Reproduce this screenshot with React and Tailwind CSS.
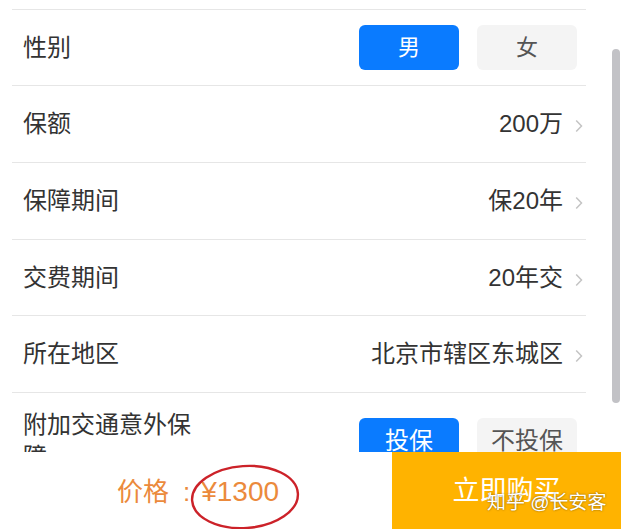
import React from "react";

const FONT = "font-['Liberation_Sans','Noto_Sans_CJK_SC',sans-serif]";

function Chevron() {
  return (
    <svg width="8" height="14" viewBox="0 0 8 14" className="ml-[12px] mt-[4px]">
      <path d="M1.2 1.5 L6.5 7 L1.2 12.5" fill="none" stroke="#c4c4c4" strokeWidth="1.5" />
    </svg>
  );
}

function PickRow({ label, options, active, h, labelClass = "" }) {
  return (
    <div className={`flex items-center justify-between border-b border-[#e6e6e6] pl-[11px] pr-[9px] ${h}`}>
      <div className={`text-[24px] text-[#333] ${labelClass}`}>{label}</div>
      <div className="flex gap-[18px]">
        {options.map((o, i) => (
          <div
            key={o}
            className={`flex h-[45px] w-[100px] items-center justify-center rounded-[6px] ${
              i === active ? "bg-[#0a7bff] text-white" : "bg-[#f4f4f4] text-[#555]"
            } ${o.length > 1 ? "text-[24px]" : "text-[22px]"}`}
          >
            {o}
          </div>
        ))}
      </div>
    </div>
  );
}

function ValueRow({ label, value, h }) {
  return (
    <div className={`flex items-center justify-between border-b border-[#e6e6e6] pl-[11px] pr-[3px] ${h}`}>
      <div className="text-[24px] text-[#333]">{label}</div>
      <div className="flex items-center">
        <span className="text-[24px] text-[#333]">{value}</span>
        <Chevron />
      </div>
    </div>
  );
}

export default function App() {
  return (
    <div className={`relative h-[529px] w-[621px] overflow-hidden bg-white leading-none ${FONT}`}>
      <div className="pl-[12px] pr-[35px]">
        <div className="h-[10px] border-b border-[#e6e6e6]" />
        <PickRow label="性别" options={["男", "女"]} active={0} h="h-[76px]" />
        <ValueRow label="保额" value="200万" h="h-[77px]" />
        <ValueRow label="保障期间" value="保20年" h="h-[77px]" />
        <ValueRow label="交费期间" value="20年交" h="h-[76px]" />
        <ValueRow label="所在地区" value="北京市辖区东城区" h="h-[77px]" />
        <PickRow
          label="附加交通意外保障"
          options={["投保", "不投保"]}
          active={0}
          h="h-[96px]"
          labelClass="w-[180px] leading-[32px]"
        />
      </div>

      {/* scrollbar thumb */}
      <div className="absolute right-[1px] top-[49px] h-[354px] w-[8px] rounded-full bg-[#c2c2c6]" />

      {/* fixed footer */}
      <div className="absolute bottom-0 left-0 right-0 flex h-[77px]">
        <div className="flex w-[392px] items-center justify-center bg-white pl-[4px] pt-[3px] text-[#eb8a3c]">
          <span className="text-[26px]">价格</span>
          <span className="ml-[14px] mr-[11px] text-[26px]">:</span>
          <span className="text-[28px]">¥1300</span>
        </div>
        <div className="flex flex-1 items-center justify-center bg-[#ffb300] pt-[2px] text-[27px] text-white">
          立即购买
        </div>
      </div>

      {/* hand-drawn circle around the price */}
      <svg className="pointer-events-none absolute left-0 top-0" width="621" height="529">
        <ellipse
          cx="245"
          cy="497"
          rx="53"
          ry="31"
          transform="rotate(-4 245 497)"
          fill="none"
          stroke="#cc2229"
          strokeWidth="2.4"
        />
      </svg>

      <div className="pointer-events-none absolute left-[487px] top-[493px] text-[19px] text-white [text-shadow:0_0_2px_rgba(0,0,0,0.55)]">
        知乎 @长安客
      </div>
    </div>
  );
}
